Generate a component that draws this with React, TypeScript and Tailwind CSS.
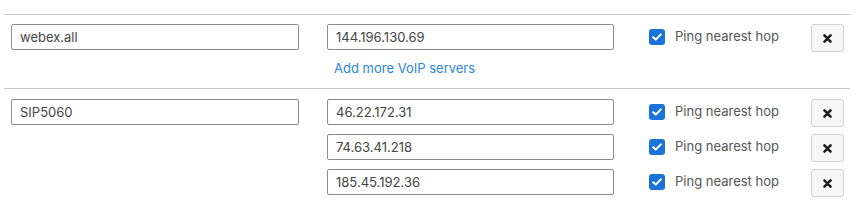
import React from 'react';

type Server = { ip: string };

function CheckIcon() {
  return (
    <span className="flex h-[16px] w-[16px] items-center justify-center rounded-[3px] bg-[#1a73d9]">
      <svg width="10" height="8" viewBox="0 0 10 8" fill="none">
        <path d="M1.2 4.2 L3.8 6.6 L8.8 1.4" stroke="#fff" strokeWidth="2" strokeLinecap="round" strokeLinejoin="round" />
      </svg>
    </span>
  );
}

function RemoveButton() {
  return (
    <button
      type="button"
      aria-label="Remove"
      className="flex h-[28px] w-[33px] items-center justify-center rounded-[3px] border border-[#d2d2d2] bg-[#f7f7f7]"
    >
      <svg width="9" height="9" viewBox="0 0 10 10">
        <path d="M1.6 1.6 L8.4 8.4 M8.4 1.6 L1.6 8.4" stroke="#1b1b1b" strokeWidth="2.8" strokeLinecap="round" />
      </svg>
    </button>
  );
}

function TextField({ value, className }: { value: string; className?: string }) {
  return (
    <input
      readOnly
      value={value}
      className={`h-[26px] rounded-[2px] border border-[#8c8c8c] bg-white pl-[8px] text-[13px] text-[#444] outline-none ${className ?? ''}`}
    />
  );
}

function ServerRow({ ip }: Server) {
  return (
    <div className="flex items-start">
      <TextField value={ip} className="w-[287px]" />
      <label className="ml-[35px] flex h-[26px] w-[162px] items-center gap-[10px] text-[13px] text-[#555]">
        <CheckIcon />
        <span>Ping nearest hop</span>
      </label>
      <RemoveButton />
    </div>
  );
}

export default function App() {
  const groups = [
    { name: 'webex.all', servers: [{ ip: '144.196.130.69' }], addLink: true },
    { name: 'SIP5060', servers: [{ ip: '46.22.172.31' }, { ip: '74.63.41.218' }, { ip: '185.45.192.36' }], addLink: false },
  ];

  return (
    <div className="h-[201px] w-[865px] overflow-hidden bg-white pt-[14px] font-['Inter','Noto_Sans',sans-serif]">
      {groups.map((g, i) => (
        <div
          key={g.name}
          className={`ml-[4px] flex w-[846px] border-t border-[#c9c9c9] pl-[7px] ${i === 0 ? 'pt-[9px] pb-[11px]' : 'pt-[10px]'}`}
        >
          <TextField value={g.name} className="w-[288px]" />
          <div className="ml-[28px] flex flex-col gap-[7px]">
            {g.servers.map((s) => (
              <ServerRow key={s.ip} ip={s.ip} />
            ))}
            {g.addLink && (
              <a href="#" className="pl-[7px] text-[13px] leading-[18px] text-[#2a86d9]">
                Add more VoIP servers
              </a>
            )}
          </div>
        </div>
      ))}
    </div>
  );
}
